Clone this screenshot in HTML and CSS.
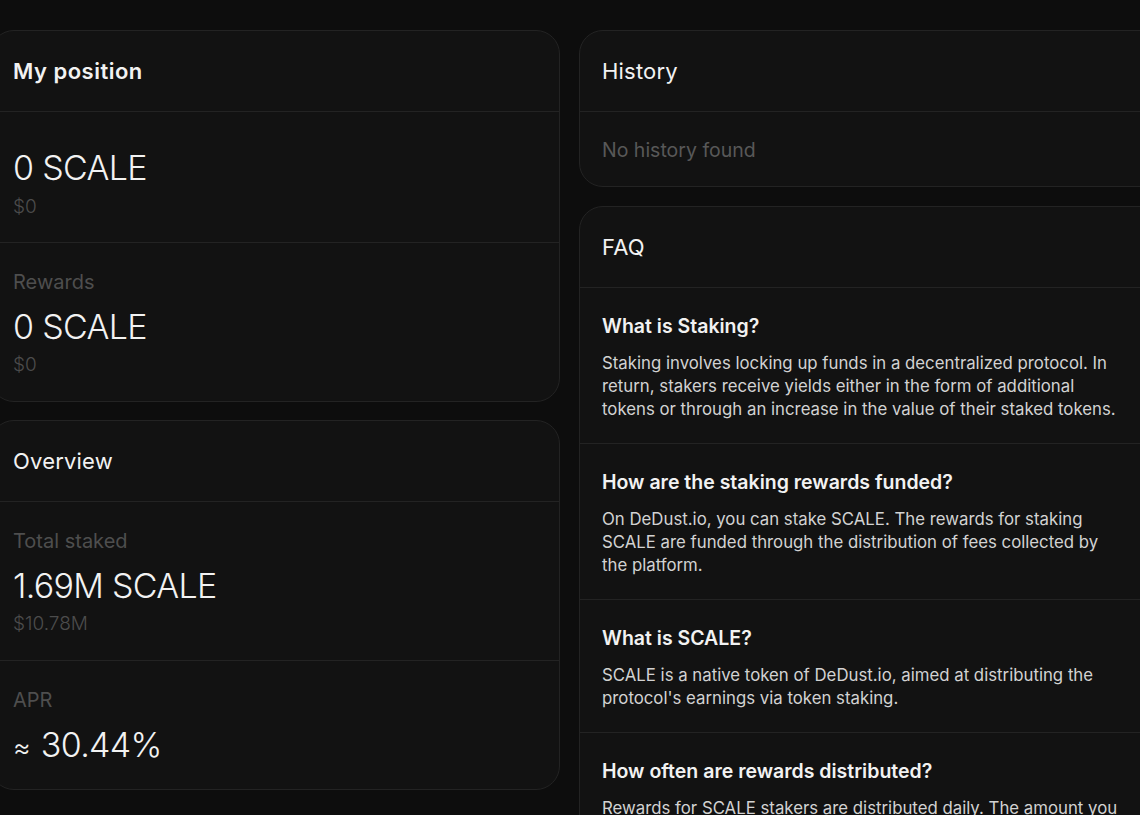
FILE: index.html
```html
<!DOCTYPE html>
<html lang="en">
<head>
    <meta charset="UTF-8">
    <meta name="viewport" content="width=device-width, initial-scale=1.0">
    <title>Staking - SCALE</title>
    <link rel="stylesheet" href="styles.css">
</head>
<body>
    <div class="layout">
        <!-- Coluna esquerda -->
        <div class="column">
            <section class="card">
                <div class="card-header bold">My position</div>
                <div class="card-row first">
                    <div class="value">0 SCALE</div>
                    <div class="sub">$0</div>
                </div>
                <div class="card-row">
                    <div class="label">Rewards</div>
                    <div class="value">0 SCALE</div>
                    <div class="sub">$0</div>
                </div>
            </section>

            <section class="card">
                <div class="card-header">Overview</div>
                <div class="card-row">
                    <div class="label">Total staked</div>
                    <div class="value">1.69M SCALE</div>
                    <div class="sub">$10.78M</div>
                </div>
                <div class="card-row">
                    <div class="label">APR</div>
                    <div class="value"><span class="approx">≈</span> 30.44%</div>
                </div>
            </section>
        </div>

        <!-- Coluna direita -->
        <div class="column right">
            <section class="card">
                <div class="card-header">History</div>
                <div class="empty">No history found</div>
            </section>

            <section class="card">
                <div class="card-header">FAQ</div>
                <div class="faq-item">
                    <h4>What is Staking?</h4>
                    <p>Staking involves locking up funds in a decentralized protocol. In return, stakers receive yields either in the form of additional tokens or through an increase in the value of their staked tokens.</p>
                </div>
                <div class="faq-item">
                    <h4>How are the staking rewards funded?</h4>
                    <p>On DeDust.io, you can stake SCALE. The rewards for staking SCALE are funded through the distribution of fees collected by the platform.</p>
                </div>
                <div class="faq-item">
                    <h4>What is SCALE?</h4>
                    <p>SCALE is a native token of DeDust.io, aimed at distributing the protocol's earnings via token staking.</p>
                </div>
                <div class="faq-item">
                    <h4>How often are rewards distributed?</h4>
                    <p>Rewards for SCALE stakers are distributed daily. The amount you receive depends on your share of the total staked SCALE.</p>
                </div>
            </section>
        </div>
    </div>
</body>
</html>
```

FILE: styles.css
```css
/* Estilo Global */
body {
    margin: 0;
    font-family: Inter, "Noto Sans", sans-serif;
    background-color: #0d0d0d;
    color: #f2f2f2;
    overflow: hidden;
}
.layout {
    width: 1220px;
    display: grid;
    grid-template-columns: 570px 620px;
    gap: 19px;
    margin-left: -10px;
    padding-top: 30px;
}
.column {
    display: flex;
    flex-direction: column;
    gap: 18px;
}
.column.right {
    gap: 19px;
}
/* Cartões */
.card {
    background-color: #121212;
    border: 1px solid #232323;
    border-radius: 24px;
    overflow: hidden;
}
.card-header {
    height: 80px;
    padding: 0 22px;
    display: flex;
    align-items: center;
    font-size: 22px;
    letter-spacing: 0.2px;
    border-bottom: 1px solid #232323;
}
.card-header.bold {
    font-weight: 600;
    letter-spacing: 0.5px;
}
.card-row {
    padding: 26px 22px 24px;
    border-bottom: 1px solid #232323;
}
.card-row.first {
    padding-top: 36px;
    padding-bottom: 23px;
}
.card-row:last-child {
    border-bottom: none;
}
.label {
    font-size: 20px;
    color: #4e4e4e;
    line-height: 26px;
    margin-bottom: 12px;
}
.value {
    font-size: 34px;
    font-weight: 300;
    line-height: 40px;
    letter-spacing: -0.7px;
}
.approx {
    font-size: 27px;
    line-height: 1;
    margin-right: 2px;
}
.sub {
    font-size: 19px;
    font-weight: 300;
    color: #4c4c4c;
    line-height: 24px;
    margin-top: 6px;
}
.first .sub {
    margin-top: 7px;
}
.empty {
    padding: 27px 22px 25px;
    font-size: 19.5px;
    line-height: 22px;
    color: #585858;
}
/* FAQ */
.faq-item {
    padding: 26px 22px 22px;
    border-bottom: 1px solid #232323;
}
.faq-item h4 {
    margin: 0 0 14px;
    font-size: 19.5px;
    font-weight: 600;
    line-height: 24px;
}
.faq-item p {
    max-width: 524px;
    margin: 0;
    font-size: 16.8px;
    line-height: 23px;
    color: #d2d2d2;
}
```
